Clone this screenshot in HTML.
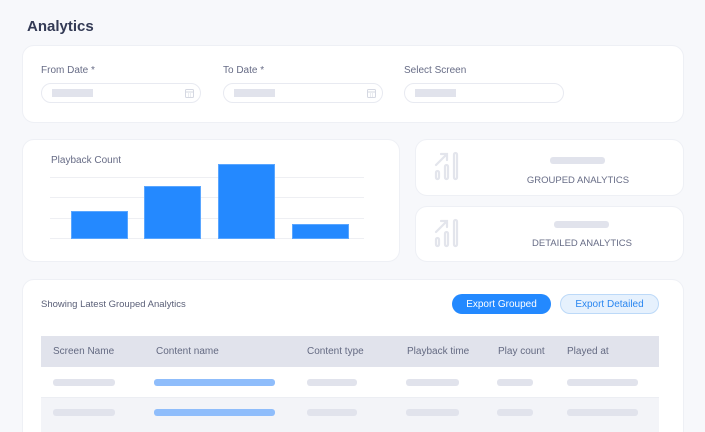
<!DOCTYPE html>
<html><head><style>
*{margin:0;padding:0;box-sizing:border-box}
html,body{width:705px;height:432px;overflow:hidden}
body{background:#f7f8fb;font-family:"Liberation Sans",sans-serif;position:relative}
.a{position:absolute}
.card{position:absolute;background:#fff;border:1px solid #eef0f5;border-radius:12px}
.lbl{position:absolute;font-size:10px;color:#676c86}
.inp{position:absolute;top:83px;height:20px;width:160px;border:1px solid #e8eaf1;border-radius:10px;background:#fff}
.ph{position:absolute;left:10px;top:5px;width:41px;height:8px;background:#e1e3ec}
.bar{position:absolute;background:#2489ff;border:1px solid #5aa6ff}
.gl{position:absolute;left:50px;width:314px;height:1px;background:#eeeff3}
.sk{position:absolute;height:7px;border-radius:3px;background:#e1e3ec}
.bl{background:#8fbdfb}
.hd{position:absolute;top:346px;font-size:10px;color:#646a82}
.btn{position:absolute;top:294px;width:99px;height:20px;border-radius:10px;font-size:10px;display:flex;align-items:center;justify-content:center}
</style></head><body>
<div class="a" style="left:27px;top:18px;font-size:15px;font-weight:bold;color:#333a55">Analytics</div>

<div class="card" style="left:22px;top:45px;width:662px;height:78px"></div>
<div class="lbl" style="left:41px;top:65px">From Date *</div>
<div class="lbl" style="left:223px;top:65px">To Date *</div>
<div class="lbl" style="left:404px;top:65px">Select Screen</div>
<div class="inp" style="left:41px"><div class="ph"></div><svg class="a" style="right:6px;top:4px" width="9" height="10" viewBox="0 0 9 10"><rect x=".5" y="1.5" width="8" height="8" rx="1" fill="none" stroke="#d5d8e2"/><path d="M.5 4h8M3 6h1M5 6h1M3 8h1M5 8h1" stroke="#d5d8e2"/></svg></div>
<div class="inp" style="left:223px"><div class="ph"></div><svg class="a" style="right:6px;top:4px" width="9" height="10" viewBox="0 0 9 10"><rect x=".5" y="1.5" width="8" height="8" rx="1" fill="none" stroke="#d5d8e2"/><path d="M.5 4h8M3 6h1M5 6h1M3 8h1M5 8h1" stroke="#d5d8e2"/></svg></div>
<div class="inp" style="left:404px"><div class="ph"></div></div>

<div class="card" style="left:22px;top:139px;width:378px;height:123px"></div>
<div class="a" style="left:51px;top:155px;font-size:10px;color:#676c86">Playback Count</div>
<div class="gl" style="top:177px"></div><div class="gl" style="top:197px"></div><div class="gl" style="top:218px"></div><div class="gl" style="top:238px"></div>
<div class="bar" style="left:71px;top:211px;width:57px;height:28px"></div>
<div class="bar" style="left:144px;top:186px;width:57px;height:53px"></div>
<div class="bar" style="left:218px;top:164px;width:57px;height:75px"></div>
<div class="bar" style="left:292px;top:224px;width:57px;height:15px"></div>

<div class="card" style="left:415px;top:139px;width:269px;height:57px"></div>
<div class="card" style="left:415px;top:206px;width:269px;height:56px"></div>
<svg class="a" style="left:434px;top:151px" width="30" height="30" viewBox="0 0 30 30" fill="none" stroke="#e3e5ec" stroke-width="2.2" stroke-linecap="round"><path d="M2 14L13 3M7 3h6v6"/><rect x="2" y="20" width="3" height="8" rx="1.5"/><rect x="11" y="14" width="3" height="14" rx="1.5"/><rect x="20" y="2" width="3" height="26" rx="1.5"/></svg>
<svg class="a" style="left:434px;top:218px" width="30" height="30" viewBox="0 0 30 30" fill="none" stroke="#e3e5ec" stroke-width="2.2" stroke-linecap="round"><path d="M2 14L13 3M7 3h6v6"/><rect x="2" y="20" width="3" height="8" rx="1.5"/><rect x="11" y="14" width="3" height="14" rx="1.5"/><rect x="20" y="2" width="3" height="26" rx="1.5"/></svg>
<div class="sk" style="left:550px;top:157px;width:55px"></div>
<div class="a" style="left:515px;top:175px;width:126px;text-align:center;font-size:9.5px;color:#676c86">GROUPED ANALYTICS</div>
<div class="sk" style="left:554px;top:221px;width:55px"></div>
<div class="a" style="left:515px;top:238px;width:134px;text-align:center;font-size:9.5px;color:#676c86">DETAILED ANALYTICS</div>

<div class="card" style="left:22px;top:279px;width:662px;height:165px"></div>
<div class="a" style="left:41px;top:299px;font-size:9.5px;color:#5b6078">Showing Latest Grouped Analytics</div>
<div class="btn" style="left:452px;background:#2389ff;color:#fff">Export Grouped</div>
<div class="btn" style="left:560px;background:#e6f1fd;border:1px solid #bcd9f8;color:#2a86f0">Export Detailed</div>

<div class="a" style="left:41px;top:336px;width:618px;height:31px;background:#e1e3ec"></div>
<div class="a" style="left:41px;top:367px;width:618px;height:31px;background:#fff;border-bottom:1px solid #eceef3"></div>
<div class="a" style="left:41px;top:398px;width:618px;height:34px;background:#f3f4f8"></div>
<div class="hd" style="left:53px">Screen Name</div>
<div class="hd" style="left:156px">Content name</div>
<div class="hd" style="left:307px">Content type</div>
<div class="hd" style="left:407px">Playback time</div>
<div class="hd" style="left:498px">Play count</div>
<div class="hd" style="left:567px">Played at</div>

<div class="sk" style="left:53px;top:379px;width:62px"></div>
<div class="sk bl" style="left:154px;top:379px;width:121px"></div>
<div class="sk" style="left:307px;top:379px;width:50px"></div>
<div class="sk" style="left:406px;top:379px;width:53px"></div>
<div class="sk" style="left:497px;top:379px;width:36px"></div>
<div class="sk" style="left:567px;top:379px;width:71px"></div>
<div class="sk" style="left:53px;top:409px;width:62px"></div>
<div class="sk bl" style="left:154px;top:409px;width:121px"></div>
<div class="sk" style="left:307px;top:409px;width:50px"></div>
<div class="sk" style="left:406px;top:409px;width:53px"></div>
<div class="sk" style="left:497px;top:409px;width:36px"></div>
<div class="sk" style="left:567px;top:409px;width:71px"></div>
</body></html>
